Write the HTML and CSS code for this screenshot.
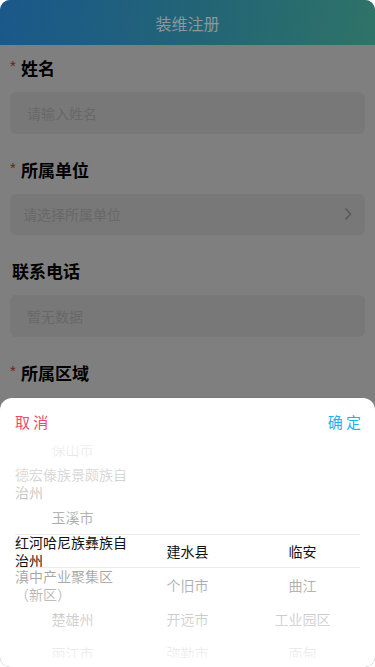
FILE: index.html
```html
<!DOCTYPE html>
<html lang="zh-CN">
<head>
<meta charset="utf-8">
<meta name="viewport" content="width=device-width, initial-scale=1">
<title>装维注册</title>
<link rel="stylesheet" href="styles.css">
</head>
<body>
<div class="screen">
  <header class="nav"><span class="nav-title">装维注册</span></header>
  <main class="form">
    <section class="field">
      <div class="label"><span class="req">*</span>姓名</div>
      <div class="box box-wide"><span class="ph">请输入姓名</span></div>
    </section>
    <section class="field">
      <div class="label"><span class="req">*</span>所属单位</div>
      <div class="box box-select">
        <span class="ph">请选择所属单位</span>
        <svg class="chev" width="8" height="14" viewBox="0 0 8 14"><path d="M1.5 1.5 L6.5 7 L1.5 12.5" fill="none" stroke="currentColor" stroke-width="1.3"/></svg>
      </div>
    </section>
    <section class="field">
      <div class="label label-plain">联系电话</div>
      <div class="box box-wide"><span class="ph">暂无数据</span></div>
    </section>
    <section class="field">
      <div class="label"><span class="req">*</span>所属区域</div>
      <div class="box box-wide"><span class="ph">请选择所属区域</span></div>
    </section>
  </main>
  <div class="mask"></div>
  <div class="sheet">
    <div class="sheet-head">
      <span class="cancel">取 消</span>
      <span class="ok">确 定</span>
    </div>
    <div class="picker">
      <div class="cols">
        <div class="col col-a">
          <div class="item"><span>保山市</span></div>
          <div class="item"><span>德宏傣族景颇族自治州</span></div>
          <div class="item"><span>玉溪市</span></div>
          <div class="item"><span>红河哈尼族彝族自治州</span></div>
          <div class="item"><span>滇中产业聚集区（新区）</span></div>
          <div class="item"><span>楚雄州</span></div>
          <div class="item"><span>丽江市</span></div>
        </div>
        <div class="col">
          <div class="item"><span>建水县</span></div>
          <div class="item"><span>个旧市</span></div>
          <div class="item"><span>开远市</span></div>
          <div class="item"><span>弥勒市</span></div>
        </div>
        <div class="col">
          <div class="item"><span>临安</span></div>
          <div class="item"><span>曲江</span></div>
          <div class="item"><span>工业园区</span></div>
          <div class="item"><span>面甸</span></div>
        </div>
      </div>
      <div class="fade fade-top"></div>
      <div class="indicator"></div>
      <div class="fade fade-bottom"></div>
    </div>
  </div>
</div>
</body>
</html>
```
FILE: styles.css
```css
html, body {
  margin: 0;
  padding: 0;
  background: #ffffff;
}
body {
  font-family: "Liberation Sans", "Noto Sans CJK SC", sans-serif;
}
.screen {
  position: relative;
  width: 375px;
  height: 667px;
  overflow: hidden;
  border-radius: 10px;
  background: #ffffff;
}
.nav {
  position: relative;
  z-index: 3;
  height: 45px;
  display: flex;
  align-items: center;
  justify-content: center;
  background: linear-gradient(100deg, #1a588b 0%, #236575 55%, #2f7368 100%);
}
.nav-title {
  font-family: "Noto Sans CJK SC", sans-serif;
  font-size: 16px;
  line-height: 20px;
  color: #8c979c;
}
.form {
  display: flex;
  flex-direction: column;
}
.field {
  padding-top: 10px;
  padding-bottom: 13px;
}
.label {
  height: 26px;
  line-height: 26px;
  padding-left: 10px;
  font-family: "Noto Sans CJK SC", sans-serif;
  font-size: 17px;
  font-weight: 700;
  color: #000000;
  margin-bottom: 11px;
}
.label-plain {
  padding-left: 12px;
}
.req {
  display: inline-block;
  width: 11px;
  font-family: "Liberation Sans", sans-serif;
  font-size: 15px;
  font-weight: 400;
  color: #e23a36;
  vertical-align: top;
  line-height: 22px;
}
.box {
  margin: 0 10px;
  height: 41.5px;
  border-radius: 6px;
  background: #f0f0f0;
  display: flex;
  align-items: center;
  justify-content: space-between;
  padding: 0 13px 0 17px;
}
.box-select {
  padding-left: 13px;
}
.ph {
  font-family: "Noto Sans CJK SC", sans-serif;
  font-size: 14px;
  line-height: 20px;
  color: #d0d0d0;
}
.chev {
  color: #aaaaaa;
}
.mask {
  position: absolute;
  left: 0;
  top: 0;
  right: 0;
  bottom: 0;
  z-index: 2;
  background: rgba(0, 0, 0, 0.5);
}
.sheet {
  position: absolute;
  left: 0;
  right: 0;
  bottom: 0;
  z-index: 4;
  height: 269px;
  background: #ffffff;
  border-radius: 12px 12px 0 0;
  display: flex;
  flex-direction: column;
}
.sheet-head {
  height: 47px;
  display: flex;
  align-items: center;
  justify-content: space-between;
  padding: 0 14px 0 15px;
  font-family: "Noto Sans CJK SC", sans-serif;
  font-size: 15px;
  line-height: 20px;
}
.cancel {
  color: #f3476a;
}
.ok {
  color: #1eb1ef;
}
.picker {
  position: relative;
  height: 213px;
  margin: 0 15px;
  overflow: hidden;
}
.cols {
  display: grid;
  grid-template-columns: 1fr 1fr 1fr;
  height: 100%;
}
.col {
  display: flex;
  flex-direction: column;
  padding-top: 89px;
}
.col-a {
  transform: translateY(-102px);
}
.item {
  height: 34px;
  flex: none;
  display: flex;
  align-items: center;
  justify-content: center;
  font-family: "Noto Sans CJK SC", sans-serif;
  font-size: 14px;
  line-height: 18px;
  color: #111111;
}
.fade {
  position: absolute;
  left: 0;
  right: 0;
  pointer-events: none;
}
.fade-top {
  top: 0;
  height: 89px;
  background: linear-gradient(180deg, rgba(255,255,255,0.95), rgba(255,255,255,0.6));
}
.fade-bottom {
  top: 123px;
  bottom: 0;
  background: linear-gradient(0deg, rgba(255,255,255,0.95), rgba(255,255,255,0.6));
}
.indicator {
  position: absolute;
  left: 0;
  right: 0;
  top: 89px;
  height: 34px;
  box-sizing: border-box;
  border-top: 1px solid #ececec;
  border-bottom: 1px solid #ececec;
  pointer-events: none;
}
```
